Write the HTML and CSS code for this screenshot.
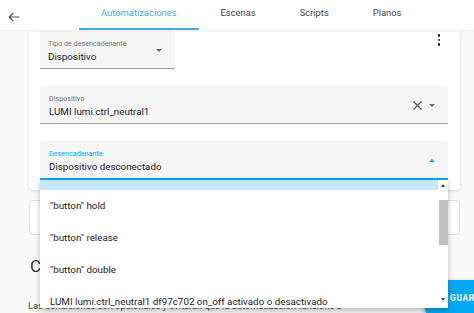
FILE: index.html
```html
<!DOCTYPE html>
<html lang="es">
<head>
    <meta charset="UTF-8">
    <meta name="viewport" content="width=device-width, initial-scale=1.0">
    <title>Automatizaciones</title>
    <link rel="stylesheet" href="styles.css">
</head>
<body>

    <!-- Top bar with tabs -->
    <div class="toolbar">
        <div class="back">
            <svg width="12" height="10" viewBox="0 0 12 10"><path d="M11.5 5H1.2M5.2 1L1.2 5l4 4" fill="none" stroke="#555" stroke-width="1.2"/></svg>
        </div>
        <div class="tabs">
            <div class="tab active">Automatizaciones</div>
            <div class="tab">Escenas</div>
            <div class="tab">Scripts</div>
            <div class="tab">Planos</div>
        </div>
    </div>

    <div class="content">
        <!-- Trigger card -->
        <div class="card">
            <div class="card-row">
                <div class="field small">
                    <span class="label">Tipo de desencadenante</span>
                    <span class="value">Dispositivo</span>
                    <span class="arrow down"></span>
                </div>
                <div class="menu-dots"><i></i><i></i><i></i></div>
            </div>
            <div class="field">
                <span class="label">Dispositivo</span>
                <span class="value">LUMI lumi.ctrl_neutral1</span>
                <svg class="clear" width="9" height="9" viewBox="0 0 9 9"><path d="M0.5 0.5l8 8M8.5 0.5l-8 8" stroke="#555" stroke-width="1.1"/></svg>
                <span class="arrow down"></span>
            </div>
            <div class="field focused">
                <span class="label">Desencadenante</span>
                <span class="value">Dispositivo desconectado</span>
                <span class="arrow up"></span>
            </div>
        </div>

        <div class="card outlined"></div>

        <h2 class="section-title">Condiciones</h2>
        <p class="section-text">Las condiciones son opcionales y evitarán que la automatización funcione a</p>
    </div>

    <!-- Save button -->
    <div class="fab">GUARDAR</div>

    <!-- Open dropdown list -->
    <div class="dropdown">
        <div class="options">
            <div class="option selected">Dispositivo desconectado</div>
            <div class="option">"button" hold</div>
            <div class="option">"button" release</div>
            <div class="option">"button" double</div>
            <div class="option">LUMI lumi.ctrl_neutral1 df97c702 on_off activado o desactivado</div>
        </div>
        <div class="scrollbar">
            <span class="sb-arrow up"></span>
            <span class="sb-thumb"></span>
            <span class="sb-arrow down"></span>
        </div>
    </div>

</body>
</html>
```

FILE: styles.css
```css
body {
    margin: 0;
    width: 474px;
    height: 313px;
    overflow: hidden;
    position: relative;
    background: #fafafa;
    font-family: Roboto, 'Liberation Sans', sans-serif;
    color: #212121;
}

/* Toolbar */
.toolbar {
    height: 30px;
    background: #fff;
    display: flex;
    align-items: stretch;
    box-shadow: 0 1px 2px rgba(0, 0, 0, 0.08);
    position: relative;
    z-index: 2;
}

.back {
    width: 79px;
    padding: 7px 0 0 8px;
    box-sizing: border-box;
}

.tabs {
    display: flex;
}

.tab {
    padding: 6px 22px 0;
    font-size: 9.4px;
    line-height: 13px;
    color: #444;
    box-sizing: border-box;
}

.tab.active {
    color: #4aa8e0;
    border-bottom: 2px solid #4aa8e0;
}

/* Content */
.content {
    padding: 0 14px 0 29px;
}

.card {
    background: #fff;
    border-radius: 0 0 4px 4px;
    box-shadow: 0 1px 3px rgba(0, 0, 0, 0.12);
    padding: 1px 12px 10px 11px;
    display: flex;
    flex-direction: column;
    gap: 17px;
}

.card.outlined {
    margin-top: 10px;
    height: 33px;
    border: 1px solid #e0e0e0;
    border-radius: 4px;
    box-shadow: none;
    padding: 0;
}

.card-row {
    display: flex;
    justify-content: space-between;
}

.field {
    position: relative;
    height: 38px;
    background: #f5f5f5;
    border-bottom: 1px solid #9e9e9e;
    border-radius: 3px 3px 0 0;
    padding: 8px 0 0 9px;
    box-sizing: border-box;
    display: flex;
    flex-direction: column;
}

.field.small {
    width: 135px;
    padding-left: 8px;
}

.field.focused {
    height: 39px;
    border-bottom: 2px solid #03a9f4;
}

.label {
    font-size: 7.2px;
    color: #777;
    line-height: 9px;
}

.focused .label {
    color: #03a9f4;
}

.value {
    font-size: 9.8px;
    line-height: 17px;
    color: #222;
}

.arrow {
    position: absolute;
    right: 13px;
    top: 18px;
    width: 0;
    height: 0;
    border-left: 3px solid transparent;
    border-right: 3px solid transparent;
}

.arrow.down {
    border-top: 3px solid #666;
}

.arrow.up {
    border-bottom: 3px solid #03a9f4;
}

.clear {
    position: absolute;
    right: 26px;
    top: 15px;
}

.menu-dots {
    display: flex;
    flex-direction: column;
    gap: 2px;
    padding: 3px 8px 0 0;
}

.menu-dots i {
    width: 2.5px;
    height: 2.5px;
    background: #222;
    border-radius: 50%;
}

.section-title {
    margin: 21px 0 0 1px;
    font-size: 17px;
    font-weight: 400;
    color: #333;
}

.section-text {
    margin: 24px 0 0 -1px;
    font-size: 9.3px;
    color: #444;
    white-space: nowrap;
}

/* Floating save button */
.fab {
    position: absolute;
    left: 424px;
    top: 280px;
    height: 46px;
    padding: 0 20px 0 26px;
    border-radius: 24px;
    background: #03a9f4;
    color: #fff;
    font-size: 8.5px;
    font-weight: 700;
    letter-spacing: 0.6px;
    line-height: 36px;
    box-shadow: 0 2px 5px rgba(0, 0, 0, 0.3);
}

/* Dropdown list */
.dropdown {
    position: absolute;
    left: 40px;
    top: 180px;
    width: 408px;
    height: 128px;
    background: #fff;
    box-shadow: 0 3px 6px rgba(0, 0, 0, 0.25);
    overflow: hidden;
    display: flex;
    z-index: 3;
}

.options {
    flex: 1;
    margin-top: -22px;
    min-width: 0;
}

.option {
    height: 32px;
    line-height: 32px;
    padding-left: 10px;
    font-size: 9.8px;
    color: #222;
    white-space: nowrap;
}

.option.selected {
    background: #c5e7fa;
    color: transparent;
}

.scrollbar {
    width: 10px;
    position: relative;
    background: #fff;
}

.sb-thumb {
    position: absolute;
    left: 1px;
    top: 20px;
    width: 9px;
    height: 45px;
    background: #c1c1c1;
}

.sb-arrow {
    position: absolute;
    left: 3px;
    width: 0;
    height: 0;
    border-left: 2.5px solid transparent;
    border-right: 2.5px solid transparent;
}

.sb-arrow.up {
    top: 4px;
    border-bottom: 3px solid #444;
}

.sb-arrow.down {
    top: 118px;
    border-top: 3px solid #444;
}
```
